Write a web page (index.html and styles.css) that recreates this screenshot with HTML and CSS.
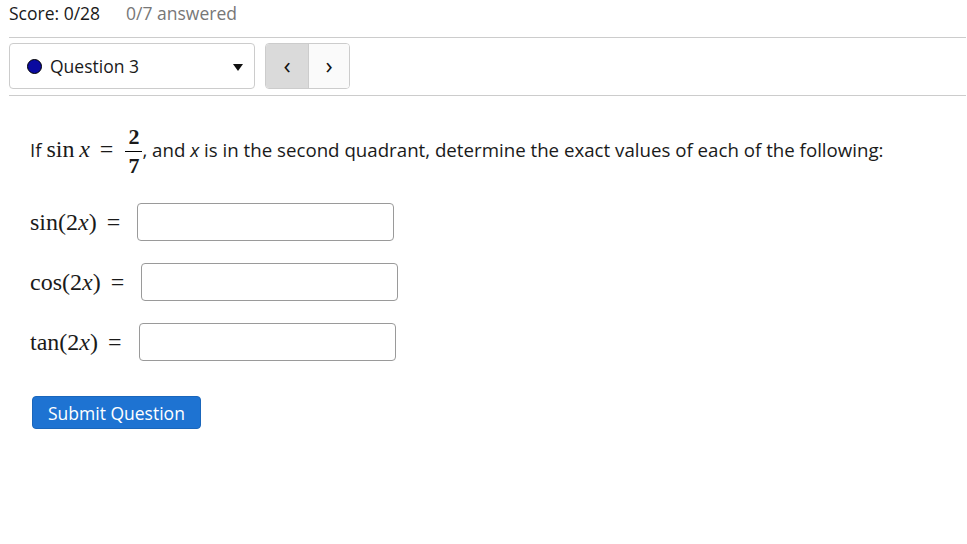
FILE: index.html
```html
<!DOCTYPE html>
<html lang="en">
<head>
    <meta charset="UTF-8">
    <title>Question 3</title>
    <link rel="stylesheet" href="styles.css">
</head>
<body>
    <div class="page">
        <div class="score-bar">
            <span class="score">Score: 0/28</span>
            <span class="answered">0/7 answered</span>
        </div>

        <div class="question-nav">
            <div class="question-select">
                <span class="status-dot"></span>
                <span class="select-label">Question 3</span>
                <span class="select-caret"></span>
            </div>
            <div class="nav-buttons">
                <div class="nav-btn prev">&lsaquo;</div>
                <div class="nav-btn next">&rsaquo;</div>
            </div>
        </div>

        <div class="question-body">
            <p class="question-text">
                If <span class="math"><span class="fn">sin</span>&#8201;<i>x</i><span class="eq">=</span><span class="frac"><span class="num">2</span><span class="den">7</span></span></span>, and <i class="var">x</i> is in the second quadrant, determine the exact values of each of the following:
            </p>

            <div class="answer-row">
                <span class="math"><span class="fn">sin</span>(2<i>x</i>)<span class="eq">=</span></span>
                <input class="answer-input" type="text">
            </div>
            <div class="answer-row">
                <span class="math"><span class="fn">cos</span>(2<i>x</i>)<span class="eq">=</span></span>
                <input class="answer-input" type="text">
            </div>
            <div class="answer-row">
                <span class="math"><span class="fn">tan</span>(2<i>x</i>)<span class="eq">=</span></span>
                <input class="answer-input" type="text">
            </div>

            <button class="submit-btn">Submit Question</button>
        </div>
    </div>
</body>
</html>
```

FILE: styles.css
```css
:root {
    --border-color: #cccccc;
    --text-color: #1a1a1a;
    --muted-color: #777777;
    --primary-color: #1e73d2;
}

body {
    margin: 0;
    font-family: "Open Sans", "Noto Sans", sans-serif;
    font-size: 17.5px;
    color: var(--text-color);
    background: #ffffff;
}

.page {
    margin: 0 1px 0 9px;
}

.score-bar {
    height: 38px;
    display: flex;
    align-items: flex-start;
    gap: 26px;
    padding-top: 1px;
    box-sizing: border-box;
    border-bottom: 1px solid var(--border-color);
}

.answered {
    color: var(--muted-color);
}

.question-nav {
    display: flex;
    gap: 10px;
    padding: 5px 0 6px;
    border-bottom: 1px solid var(--border-color);
}

.question-select {
    width: 246px;
    height: 46px;
    box-sizing: border-box;
    border: 1px solid var(--border-color);
    border-radius: 4px;
    display: flex;
    align-items: center;
    padding: 0 11px 0 17px;
}

.status-dot {
    width: 13px;
    height: 13px;
    border-radius: 50%;
    background: #0a0aa0;
    border: 1.5px solid #000;
    margin-right: 8px;
}

.select-label {
    flex: 1;
}

.select-caret {
    width: 0;
    height: 0;
    border-left: 5px solid transparent;
    border-right: 5px solid transparent;
    border-top: 7px solid #111;
    margin-top: 2px;
}

.nav-buttons {
    display: flex;
    height: 46px;
    box-sizing: border-box;
    border: 1px solid var(--border-color);
    border-radius: 4px;
    overflow: hidden;
}

.nav-btn {
    width: 40px;
    display: flex;
    align-items: center;
    justify-content: center;
    font-size: 24px;
    color: #111;
    padding-bottom: 3px;
    box-sizing: border-box;
}

.nav-btn.prev {
    width: 43px;
    background: #dadada;
    border-right: 1px solid var(--border-color);
}

.nav-btn.next {
    background: #fafafa;
}

.question-body {
    padding-left: 21px;
}

.question-text {
    margin: 30px 0 0;
    line-height: 26px;
    font-size: 18.7px;
}

.math {
    font-family: "Liberation Serif", "DejaVu Serif", serif;
    font-size: 24px;
}

.math i,
.var {
    font-style: italic;
}

.eq {
    margin: 0 17px 0 10px;
}

.question-text .eq {
    margin: 0 12px 0 10px;
}

.frac {
    display: inline-flex;
    flex-direction: column;
    align-items: center;
    vertical-align: middle;
    line-height: 22px;
    font-weight: bold;
    font-size: 22px;
}

.num {
    border-bottom: 1px solid #000;
    padding: 0 3px 3px;
}

.den {
    padding-top: 3px;
}

.answer-row {
    display: flex;
    align-items: center;
    margin-top: 22px;
}

.question-text + .answer-row {
    margin-top: 26px;
}

.answer-input {
    width: 257px;
    height: 38px;
    box-sizing: border-box;
    border: 1px solid #9a9a9a;
    border-radius: 4px;
    font-size: 17px;
}

.submit-btn {
    display: block;
    margin: 35px 0 0 2px;
    height: 33px;
    padding: 0 15px;
    font-family: "Open Sans", "Noto Sans", sans-serif;
    font-size: 17.5px;
    color: #ffffff;
    background: var(--primary-color);
    border: 1px solid #1a66bb;
    border-radius: 4px;
}
```
